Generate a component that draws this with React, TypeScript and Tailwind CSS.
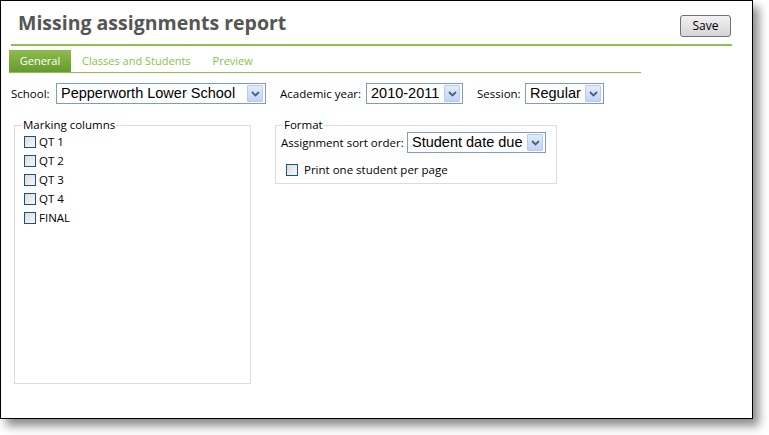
import React from "react";

const ui = { fontFamily: '"Open Sans", "Noto Sans", sans-serif' };
const arial = { fontFamily: '"Liberation Sans", Arial, sans-serif' };

function Chevron() {
  return (
    <svg width="9" height="6" viewBox="0 0 9 6">
      <path d="M1 1 L4.5 4.5 L8 1" fill="none" stroke="#4a5f86" strokeWidth="1.8" />
    </svg>
  );
}

function Select({ value, width }: { value: string; width: number }) {
  return (
    <div
      className="flex items-center h-[21px] border border-[#7f9db9] bg-white pl-[4px] pr-[2px] box-border"
      style={{ width }}
    >
      <span className="flex-1 text-[14.5px] leading-[17px] text-black whitespace-nowrap overflow-hidden" style={arial}>
        {value}
      </span>
      <div className="w-[16px] h-[17px] shrink-0 flex items-center justify-center rounded-[1px] border border-[#b7cbef] bg-gradient-to-b from-[#e3ecfc] to-[#c2d4f4]">
        <Chevron />
      </div>
    </div>
  );
}

function Check() {
  return (
    <div className="w-[12px] h-[12px] border border-[#1c5180] bg-gradient-to-br from-[#dcdcdc] to-[#f8f8f8] shrink-0" />
  );
}

export default function App() {
  return (
    <div className="w-[769px] h-[435px] bg-white relative" style={ui}>
      <div className="w-[753px] h-[419px] border border-black bg-white shadow-[6px_7px_9px_rgba(0,0,0,0.45)] box-border">
        {/* header */}
        <div className="ml-[10px] w-[721px] h-[45px] border-b-2 border-[#8cc04f] flex items-start justify-between box-border">
          <div className="mt-[9px] ml-[7px] text-[19.5px] leading-[26px] font-bold text-[#555] whitespace-nowrap">
            Missing assignments report
          </div>
          <button className="mt-[14px] mr-[1px] w-[51px] h-[22px] rounded-[3px] border border-[#707070] bg-gradient-to-b from-[#f2f2f2] to-[#d5d5d5] text-[12px] text-black leading-[18px]">
            Save
          </button>
        </div>
        {/* tabs */}
        <div className="ml-[8px] mt-[4px] w-[632px] flex h-[23px] border-b border-[#8cc04f] box-border text-[11px]">
          <div className="w-[62px] h-[22px] bg-gradient-to-b from-[#8cbd4c] to-[#679a2e] text-white flex items-center justify-center">
            General
          </div>
          <div className="ml-[11px] h-[22px] flex items-center text-[#8cbf4c]">Classes and Students</div>
          <div className="ml-[22px] h-[22px] flex items-center text-[#8cbf4c]">Preview</div>
        </div>
        {/* parameters row */}
        <div className="flex items-center mt-[10px] h-[21px] text-[11.5px] text-black whitespace-nowrap">
          <span className="ml-[10px] w-[45px]">School:</span>
          <Select value="Pepperworth Lower School" width={210} />
          <span className="ml-[14px] w-[86px]">Academic year:</span>
          <Select value="2010-2011" width={97} />
          <span className="ml-[14px] w-[48px]">Session:</span>
          <Select value="Regular" width={79} />
        </div>
        {/* fieldsets */}
        <div className="flex items-start mt-[14px]">
          <fieldset className="ml-[13px] w-[237px] h-[266px] border border-[#dcdcdc] px-[9px] pb-0 box-border">
            <legend className="text-[11.5px] leading-[14px] text-black px-[1px] -ml-[2px]">Marking columns</legend>
            <div className="flex flex-col text-[11.5px] text-black">
              {["QT 1", "QT 2", "QT 3", "QT 4", "FINAL"].map((t) => (
                <div key={t} className="flex items-center h-[19px] gap-[3px]">
                  <Check />
                  <span>{t}</span>
                </div>
              ))}
            </div>
          </fieldset>
          <fieldset className="ml-[24px] w-[282px] h-[66px] border border-[#dcdcdc] px-[5px] box-border">
            <legend className="text-[11.5px] leading-[14px] text-black px-[1px] ml-[2px]">Format</legend>
            <div className="flex items-center h-[21px] text-[11.5px] text-black whitespace-nowrap">
              <span className="w-[126px]">Assignment sort order:</span>
              <Select value="Student date due" width={139} />
            </div>
            <div className="flex items-center mt-[8px] ml-[5px] gap-[6px] text-[11.5px] text-black whitespace-nowrap">
              <Check />
              <span>Print one student per page</span>
            </div>
          </fieldset>
        </div>
      </div>
    </div>
  );
}
